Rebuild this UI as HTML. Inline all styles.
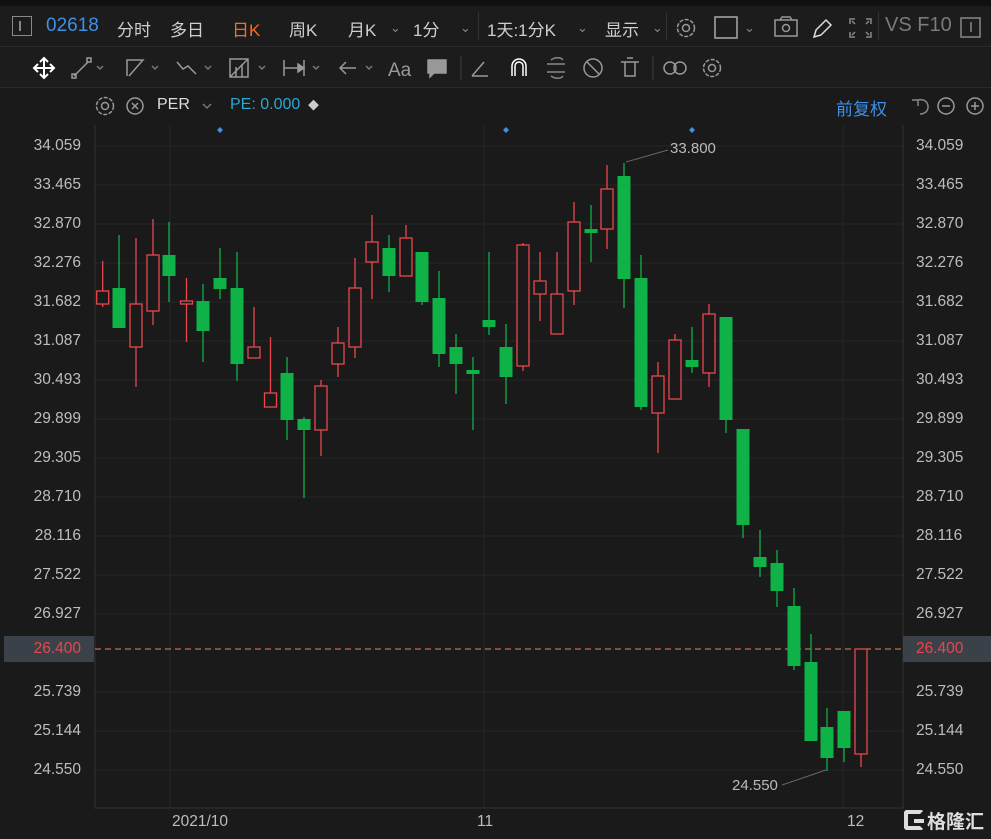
<!DOCTYPE html>
<html><head><meta charset="utf-8"><style>
*{margin:0;padding:0;box-sizing:border-box}
body{width:991px;height:839px;background:#1a1a1a;overflow:hidden;font-family:"Liberation Sans","Noto Sans CJK SC",sans-serif;color:#c8c8c8;position:relative}
.a{position:absolute;white-space:nowrap}
.r1{font-size:17px;top:16px;color:#cfcfcf}
.lab{position:absolute;font-size:15.5px;color:#bdbdbd;line-height:16px}
.l{right:910px;text-align:right}
.rr{left:916px}
</style></head><body>
<div class="a" style="left:0;top:0;width:991px;height:6px;background:#101010"></div>
<div class="a" style="left:0;top:6px;width:991px;height:41px;background:#1c1c1c;border-bottom:1px solid #2a2a2a"></div>
<div class="a" style="left:0;top:48px;width:991px;height:40px;background:#1c1c1c;border-bottom:1px solid #2a2a2a"></div>
<div class="a" style="left:12px;top:16px;width:20px;height:20px;border:1.5px solid #888"></div>
<div class="a" style="left:19px;top:21px;width:1.5px;height:10px;background:#888"></div>
<div class="a r1" style="left:46px;color:#3d8fe8;font-size:19px;top:15px">02618</div>
<div class="a r1" style="left:117px">分时</div>
<div class="a r1" style="left:170px">多日</div>
<div class="a r1" style="left:232px;color:#ff6a22">日K</div>
<div class="a r1" style="left:289px">周K</div>
<div class="a r1" style="left:348px">月K</div>
<div class="a r1" style="left:390px;font-size:13px;top:20px;color:#888">⌄</div>
<div class="a r1" style="left:413px">1分</div>
<div class="a r1" style="left:460px;font-size:13px;top:20px;color:#888">⌄</div>
<div class="a" style="left:478px;top:12px;width:1px;height:28px;background:#333"></div>
<div class="a r1" style="left:487px">1天:1分K</div>
<div class="a r1" style="left:577px;font-size:13px;top:20px;color:#888">⌄</div>
<div class="a r1" style="left:605px">显示</div>
<div class="a r1" style="left:652px;font-size:13px;top:20px;color:#888">⌄</div>
<div class="a" style="left:666px;top:12px;width:1px;height:28px;background:#333"></div>
<div class="a r1" style="left:744px;font-size:13px;top:20px;color:#888">⌄</div>
<div class="a" style="left:878px;top:12px;width:1px;height:28px;background:#333"></div>
<div class="a r1" style="left:885px;font-size:20px;top:14px;color:#7a7a7a;letter-spacing:0px">VS F10</div>
<svg class="a" style="left:0;top:0" width="991" height="125" fill="none" stroke="#999" stroke-width="1.5">
<circle cx="686" cy="28" r="8.5" stroke-dasharray="4 1.5"/><circle cx="686" cy="28" r="3.5"/>
<rect x="715" y="17" width="22" height="21" stroke="#aaa"/>
<rect x="775" y="20" width="22" height="16"/><circle cx="786" cy="28" r="3.5"/><path d="M780 20l2-3h8l2 3"/>
<path d="M814 37l2-7 10-10 5 5-10 10z" stroke="#ddd"/>
<path d="M850 24v-5h5M866 19h5v5M850 32v5h5M871 32v5h-5M855 24l-3-3M866 24l3-3M855 32l-3 3M866 32l3 3" stroke="#888"/>
<rect x="961" y="18" width="19" height="19" stroke="#888"/><path d="M971 22v10" stroke="#888"/>
<path d="M44 58v20M34 68h20M40 62l4-4 4 4M40 74l4 4 4-4M38 64l-4 4 4 4M50 64l4 4-4 4" stroke="#fff" stroke-width="2"/>
<path d="M74 76l14-14" /><rect x="72" y="74" width="4" height="4"/><rect x="87" y="58" width="4" height="4"/><path d="M97 66l3 3 3-3" stroke="#777"/>
<path d="M127 76V60h16l-14 16" /><path d="M152 66l3 3 3-3" stroke="#777"/>
<path d="M177 62l6 7 5-3 8 8" /><path d="M205 66l3 3 3-3" stroke="#777"/>
<rect x="230" y="59" width="18" height="18"/><path d="M230 77l18-18M236 67v10M242 64v13"/><path d="M259 66l3 3 3-3" stroke="#777"/>
<path d="M284 60v16M304 60v16M284 68h20"/><path d="M298 64l6 4-6 4z" fill="#999"/><path d="M313 66l3 3 3-3" stroke="#777"/>
<path d="M340 68h16M346 62l-6 6 6 6"/><path d="M366 66l3 3 3-3" stroke="#777"/>
<text x="388" y="76" font-size="19" fill="#999" stroke="none" font-family="Liberation Sans">Aa</text>
<path d="M428 60h18v13h-12l-4 4v-4h-2z" fill="#999"/>
<path d="M461 56v24" stroke="#333"/>
<path d="M472 76l12-14M472 76h16"/>
<path d="M512 76V66a7 7 0 0 1 14 0v10M515 76V66a4 4 0 0 1 8 0v10" stroke="#fff"/>
<path d="M547 64h18M547 72h18M551 60c4-3 10-3 12 0M551 76c4 3 10 3 12 0" stroke="#888"/>
<circle cx="593" cy="68" r="9"/><path d="M587 62l12 12"/>
<path d="M621 62h18M625 62v14h10V62M627 58h6"/>
<path d="M653 56v24" stroke="#333"/>
<circle cx="670" cy="68" r="6"/><circle cx="680" cy="68" r="6"/>
<circle cx="712" cy="68" r="8.5" stroke-dasharray="4 1.5"/><circle cx="712" cy="68" r="3.5"/>
<circle cx="105" cy="106" r="8.5" stroke-dasharray="4 1.5"/><circle cx="105" cy="106" r="3.5"/>
<circle cx="135" cy="106" r="8"/><path d="M132 103l6 6M138 103l-6 6"/>
<path d="M203 104l4 4 4-4" stroke="#777"/>
<path d="M918 100c12-3 14 14 2 14M912 100h6v6" stroke="#888"/>
<circle cx="946" cy="106" r="8"/><path d="M942 106h8"/>
<circle cx="975" cy="106" r="8"/><path d="M971 106h8M975 102v8"/>
</svg>
<div class="a" style="left:157px;top:96px;font-size:16px;color:#ddd">PER</div>
<div class="a" style="left:230px;top:96px;font-size:16px;color:#2aa7d6">PE: 0.000</div>
<div class="a" style="left:308px;top:97px;font-size:11px;color:#ccc">◆</div>
<div class="a" style="left:836px;top:95px;font-size:17px;color:#3d8fe8">前复权</div>

<svg class="a" style="left:0;top:0" width="991" height="839">
<g stroke="#262626" stroke-width="1">
<path d="M95 146H903M95 185H903M95 224H903M95 263H903M95 302H903M95 341H903M95 380H903M95 419H903M95 458H903M95 497H903M95 536H903M95 575H903M95 614H903M95 692H903M95 731H903M95 770H903M170 125V808M484 125V808M843 125V808"/>
</g>
<path d="M95 125V808H903V125" stroke="#333" fill="none"/>
<g fill="#3d8fe8"><path d="M220 127l3 3-3 3-3-3z"/><path d="M506 127l3 3-3 3-3-3z"/><path d="M692 127l3 3-3 3-3-3z"/></g>
<path d="M95 649H903" stroke="#e8865a" stroke-dasharray="6 4"/>
<g id="c" stroke-width="1.3"></g>
<path d="M626 162L668 150M782 785L826 770" stroke="#666"/>
</svg>
<div class="a" style="left:670px;top:140px;font-size:15px;color:#bbb">33.800</div>
<div class="a" style="left:732px;top:777px;font-size:15px;color:#bbb">24.550</div>
<div class="a" style="left:4px;top:636px;width:90px;height:26px;background:#3b4148"></div>
<div class="a" style="left:903px;top:636px;width:88px;height:26px;background:#3b4148"></div>
<div class="lab l" style="top:138px">34.059</div><div class="lab rr" style="top:138px">34.059</div>
<div class="lab l" style="top:177px">33.465</div><div class="lab rr" style="top:177px">33.465</div>
<div class="lab l" style="top:216px">32.870</div><div class="lab rr" style="top:216px">32.870</div>
<div class="lab l" style="top:255px">32.276</div><div class="lab rr" style="top:255px">32.276</div>
<div class="lab l" style="top:294px">31.682</div><div class="lab rr" style="top:294px">31.682</div>
<div class="lab l" style="top:333px">31.087</div><div class="lab rr" style="top:333px">31.087</div>
<div class="lab l" style="top:372px">30.493</div><div class="lab rr" style="top:372px">30.493</div>
<div class="lab l" style="top:411px">29.899</div><div class="lab rr" style="top:411px">29.899</div>
<div class="lab l" style="top:450px">29.305</div><div class="lab rr" style="top:450px">29.305</div>
<div class="lab l" style="top:489px">28.710</div><div class="lab rr" style="top:489px">28.710</div>
<div class="lab l" style="top:528px">28.116</div><div class="lab rr" style="top:528px">28.116</div>
<div class="lab l" style="top:567px">27.522</div><div class="lab rr" style="top:567px">27.522</div>
<div class="lab l" style="top:606px">26.927</div><div class="lab rr" style="top:606px">26.927</div>
<div class="lab l" style="top:641px;color:#e8474c">26.400</div><div class="lab rr" style="top:641px;color:#e8474c">26.400</div>
<div class="lab l" style="top:684px">25.739</div><div class="lab rr" style="top:684px">25.739</div>
<div class="lab l" style="top:723px">25.144</div><div class="lab rr" style="top:723px">25.144</div>
<div class="lab l" style="top:762px">24.550</div><div class="lab rr" style="top:762px">24.550</div>
<div class="lab" style="left:172px;top:814px">2021/10</div>
<div class="lab" style="left:477px;top:814px">11</div>
<div class="lab" style="left:847px;top:814px">12</div>
<div class="a" style="left:904px;top:810px;width:20px;height:20px;border:4px solid #ddd;border-right-color:transparent;border-radius:3px"></div>
<div class="a" style="left:914px;top:819px;width:10px;height:4px;background:#ddd"></div>
<div class="a" style="left:927px;top:807px;font-size:19px;font-weight:bold;color:#ddd">格隆汇</div>
<script>
var d=[[102.7,261,307,291,304,'r'],[119,235,328,288,328,'g'],[136,238,387,304,347,'r'],[153,219,325,255,311,'r'],[169,222,302,255,276,'g'],[186.5,278,342,301,304,'r'],[203,284,362,301,331,'g'],[220,248,299,278,289,'g'],[237,252,381,288,364,'g'],[254,307,358,347,358,'r'],[270.5,337,407,393,407,'r'],[287,357,440,373,420,'g'],[304,417,498,419,430,'g'],[321,380,456,386,430,'r'],[338,327,377,343,364,'r'],[355,258,358,288,347,'r'],[372,215,299,242,262,'r'],[389,235,292,248,276,'g'],[406,225,276,238,276,'r'],[422,252,305,252,302,'g'],[439,271,367,298,354,'g'],[456,334,394,347,364,'g'],[473,357,430,370,374,'g'],[489,252,335,320,327,'g'],[506,324,404,347,377,'g'],[523,243,371,245,366,'r'],[540,252,321,281,294,'r'],[557,252,334,294,334,'r'],[574,202,305,222,291,'r'],[591,205,262,229,233,'g'],[607,165,249,189,229,'r'],[624,163,308,176,279,'g'],[641,255,410,278,407,'g'],[658,362,453,376,413,'r'],[675,334,399,340,399,'r'],[692,327,373,360,367,'g'],[709,304,387,314,373,'r'],[726,317,433,317,420,'g'],[743,429,538,429,525,'g'],[760,530,577,557,567,'g'],[777,550,607,563,591,'g'],[794,588,670,606,666,'g'],[811,634,741,662,741,'g'],[827,708,771,727,758,'g'],[844,711,762,711,748,'g'],[861,649,767,649,754,'r']];
var s='';d.forEach(function(c){var x=c[0],col=c[5]=='r'?'#e8474c':'#0fb247';
s+='<line x1="'+x+'" y1="'+c[1]+'" x2="'+x+'" y2="'+c[2]+'" stroke="'+col+'"/>';
if(c[5]=='r')s+='<rect x="'+(x-6)+'" y="'+c[3]+'" width="12" height="'+Math.max(c[4]-c[3],2)+'" fill="#1a1a1a" stroke="'+col+'"/>';
else s+='<rect x="'+(x-6.5)+'" y="'+c[3]+'" width="13" height="'+Math.max(c[4]-c[3],3)+'" fill="'+col+'" stroke="none"/>';});
document.getElementById('c').innerHTML=s;
</script>
</body></html>
